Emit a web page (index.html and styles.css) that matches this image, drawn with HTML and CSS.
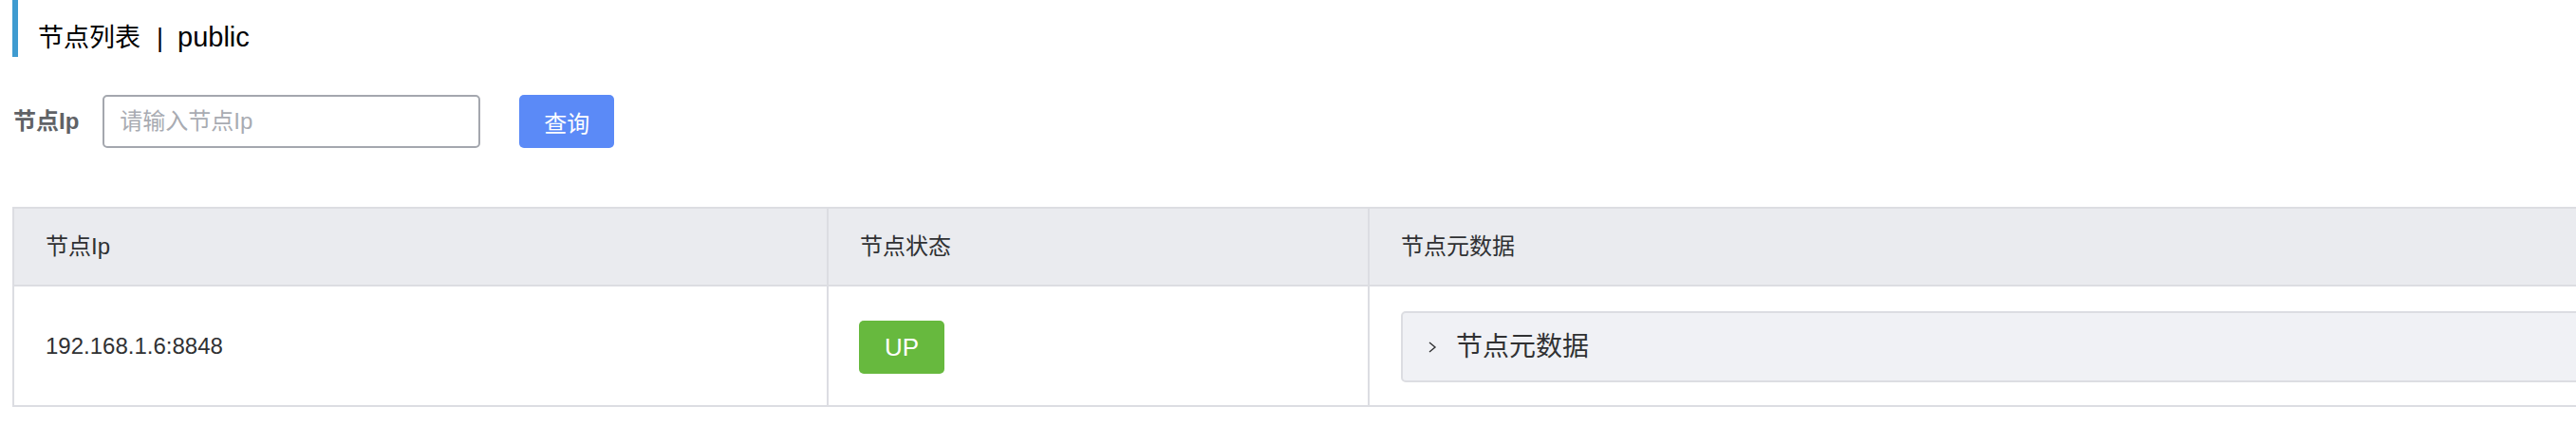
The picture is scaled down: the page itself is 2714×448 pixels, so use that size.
FILE: index.html
```html
<!DOCTYPE html>
<html lang="zh-CN">
<head>
<meta charset="utf-8">
<title>节点列表</title>
<link rel="stylesheet" href="styles.css">
</head>
<body>
<div class="page">
  <div class="title">节点列表<span class="sep">|</span><span class="ns">public</span></div>

  <div class="search">
    <label class="search-label" for="ip">节点Ip</label>
    <input id="ip" class="search-input" type="text" placeholder="请输入节点Ip">
    <button class="search-btn" type="button">查询</button>
  </div>

  <div class="table">
    <div class="cell head">节点Ip</div>
    <div class="cell head">节点状态</div>
    <div class="cell head">节点元数据</div>

    <div class="cell body">192.168.1.6:8848</div>
    <div class="cell body"><span class="badge">UP</span></div>
    <div class="cell body">
      <div class="meta">
        <svg class="chev" width="10" height="12" viewBox="0 0 10 12"><polyline points="2,1 8,6 2,11" fill="none" stroke="#303133" stroke-width="1.4"/></svg>
        <span class="meta-text">节点元数据</span>
      </div>
    </div>
  </div>
</div>
</body>
</html>
```

FILE: styles.css
```css
html, body {
  margin: 0;
  padding: 0;
  background: #ffffff;
}
body {
  overflow: hidden;
  font-family: "Liberation Sans", "Noto Sans CJK SC", sans-serif;
  color: #303133;
}
.page {
  padding-left: 13px;
}
.title {
  box-sizing: border-box;
  height: 60px;
  border-left: 6px solid #3f9bd0;
  padding-left: 21px;
  padding-top: 22px;
  font-size: 27px;
  line-height: 34px;
  color: #000000;
  white-space: nowrap;
}
.sep {
  display: inline-block;
  margin: 0 15px 0 17px;
  color: #000000;
}
.ns {
  font-size: 29px;
}
.search {
  display: flex;
  align-items: center;
  margin-top: 40px;
  height: 56px;
}
.search-label {
  font-size: 24px;
  font-weight: bold;
  line-height: 24px;
  color: #606266;
  margin-left: 1px;
  margin-right: 25px;
}
.search-input {
  box-sizing: border-box;
  width: 398px;
  height: 56px;
  border: 2px solid #a4a7ae;
  border-radius: 5px;
  padding: 0 16px;
  font-family: inherit;
  font-size: 24px;
  color: #303133;
  outline: none;
  background: #fff;
}
.search-input::placeholder {
  color: #a8abb2;
}
.search-btn {
  box-sizing: border-box;
  margin-left: 41px;
  width: 100px;
  height: 56px;
  border: none;
  border-radius: 5px;
  background: #5b8af7;
  color: #ffffff;
  font-family: inherit;
  font-size: 24px;
  padding: 0;
}
.table {
  margin-top: 62px;
  display: grid;
  grid-template-columns: 858px 570px 1fr;
  grid-template-rows: 82px 127px;
  width: 2760px;
  border-top: 2px solid #dcdde2;
  border-left: 2px solid #dcdde2;
}
.cell {
  box-sizing: border-box;
  border-right: 2px solid #dcdde2;
  border-bottom: 2px solid #dcdde2;
  padding: 0 33px;
  display: flex;
  align-items: center;
  font-size: 24px;
  line-height: 24px;
  color: #303133;
  white-space: nowrap;
}
.head {
  background: #eaebef;
}
.body {
  background: #ffffff;
}
.badge {
  display: inline-block;
  width: 90px;
  height: 56px;
  margin-left: -1px;
  margin-top: 3px;
  line-height: 56px;
  text-align: center;
  background: #67b93e;
  color: #ffffff;
  font-size: 26px;
  border-radius: 5px;
}
.meta {
  box-sizing: border-box;
  flex: 1;
  height: 75px;
  margin-top: 2px;
  border: 2px solid #dcdde2;
  border-radius: 5px;
  background: #f0f1f5;
  display: flex;
  align-items: center;
  padding-left: 26px;
}
.chev {
  display: block;
  margin-right: 20px;
}
.meta-text {
  font-size: 28px;
  line-height: 28px;
  color: #303133;
}
```
